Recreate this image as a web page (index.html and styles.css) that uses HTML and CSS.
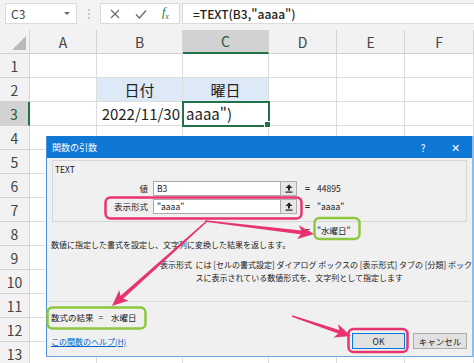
FILE: index.html
```html
<!DOCTYPE html>
<html lang="ja">
<head>
<meta charset="utf-8">
<link rel="stylesheet" href="styles.css">
</head>
<body>
<div class="app">
  <div class="toolbar">
    <div class="namebox"><span>C3</span><span class="dd"></span></div>
    <div class="grip"><i></i><i></i><i></i></div>
    <div class="fbtns">
      <svg width="10" height="10" viewBox="0 0 10 10"><path d="M1 1 L9 9 M9 1 L1 9" stroke="#6d6d6d" stroke-width="1.3"/></svg>
      <svg width="12" height="10" viewBox="0 0 12 10"><path d="M1 5.5 L4.5 9 L11 1.5" fill="none" stroke="#6d6d6d" stroke-width="1.4"/></svg>
      <span class="fx">f<sub>x</sub></span>
    </div>
    <div class="formula">=TEXT(B3,"aaaa")</div>
  </div>

  <div class="sheet">
    <div class="corner"><span class="tri"></span></div>
    <div class="ch">A</div><div class="ch">B</div><div class="ch sel">C</div><div class="ch">D</div><div class="ch">E</div><div class="ch">F</div>

    <div class="rh">1</div><div class="c"></div><div class="c"></div><div class="c"></div><div class="c"></div><div class="c"></div><div class="c"></div>
    <div class="rh">2</div><div class="c"></div><div class="c hd">日付</div><div class="c hd">曜日</div><div class="c"></div><div class="c"></div><div class="c"></div>
    <div class="rh sel">3</div><div class="c"></div><div class="c num">2022/11/30</div><div class="c active">aaaa")</div><div class="c"></div><div class="c"></div><div class="c"></div>
    <div class="rh">4</div><div class="c"></div><div class="c"></div><div class="c"></div><div class="c"></div><div class="c"></div><div class="c"></div>
    <div class="rh">5</div><div class="c"></div><div class="c"></div><div class="c"></div><div class="c"></div><div class="c"></div><div class="c"></div>
    <div class="rh">6</div><div class="c"></div><div class="c"></div><div class="c"></div><div class="c"></div><div class="c"></div><div class="c"></div>
    <div class="rh">7</div><div class="c"></div><div class="c"></div><div class="c"></div><div class="c"></div><div class="c"></div><div class="c"></div>
    <div class="rh">8</div><div class="c"></div><div class="c"></div><div class="c"></div><div class="c"></div><div class="c"></div><div class="c"></div>
    <div class="rh">9</div><div class="c"></div><div class="c"></div><div class="c"></div><div class="c"></div><div class="c"></div><div class="c"></div>
    <div class="rh">10</div><div class="c"></div><div class="c"></div><div class="c"></div><div class="c"></div><div class="c"></div><div class="c"></div>
    <div class="rh">11</div><div class="c"></div><div class="c"></div><div class="c"></div><div class="c"></div><div class="c"></div><div class="c"></div>
    <div class="rh">12</div><div class="c"></div><div class="c"></div><div class="c"></div><div class="c"></div><div class="c"></div><div class="c"></div>
    <div class="rh">13</div><div class="c"></div><div class="c"></div><div class="c"></div><div class="c"></div><div class="c"></div><div class="c"></div>
  </div>

  <div class="dialog">
    <div class="titlebar">
      <span class="title">関数の引数</span>
      <span class="tbtn help-q">?</span>
      <span class="tbtn close">✕</span>
    </div>
    <div class="group">
      <div class="gname">TEXT</div>
      <div class="arg">
        <span class="alabel">値</span>
        <span class="ainput">B3</span>
        <span class="refbtn"><svg width="8" height="9" viewBox="0 0 8 9"><path d="M4 0.5 L7.5 4 L5 4 L5 6.5 L3 6.5 L3 4 L0.5 4 Z" fill="#222"/><rect x="0.5" y="7.5" width="7" height="1.2" fill="#222"/></svg></span>
        <span class="aval"><b>=</b>44895</span>
      </div>
      <div class="arg">
        <span class="alabel">表示形式</span>
        <span class="ainput">"aaaa"</span>
        <span class="refbtn"><svg width="8" height="9" viewBox="0 0 8 9"><path d="M4 0.5 L7.5 4 L5 4 L5 6.5 L3 6.5 L3 4 L0.5 4 Z" fill="#222"/><rect x="0.5" y="7.5" width="7" height="1.2" fill="#222"/></svg></span>
        <span class="aval"><b>=</b>"aaaa"</span>
      </div>
    </div>
    <div class="fres"><b>=</b>"水曜日"</div>
    <div class="desc">数値に指定した書式を設定し、文字列に変換した結果を返します。</div>
    <div class="detail">
      <span class="dt">表示形式</span>
      <span class="dd2">には [セルの書式設定] ダイアログ ボックスの [表示形式] タブの [分類] ボック<br>スに表示されている数値形式を、文字列として指定します</span>
    </div>
    <div class="sep"></div>
    <div class="result">数式の結果 <span class="eq">=</span> 水曜日</div>
    <div class="bottom">
      <a class="help" href="#">この関数のヘルプ(H)</a>
      <div class="btns">
        <span class="btn ok">OK</span>
        <span class="btn">キャンセル</span>
      </div>
    </div>
  </div>

  <svg class="annot" width="474" height="363" viewBox="0 0 474 363">
    <g fill="none" stroke-width="2.5">
      <rect x="105.5" y="197.5" width="196" height="21" rx="5" stroke="#e8336f"/>
      <rect x="348.5" y="329" width="59" height="23" rx="5" stroke="#e8336f"/>
      <rect x="314.5" y="218" width="45" height="21" rx="5" stroke="#8dc63f"/>
      <rect x="47.5" y="307.5" width="98" height="21" rx="5" stroke="#8dc63f"/>
    </g>
    <g fill="#e8336f">
      <polygon points="207.5,221.56 206.5,220.44 116.67,299.2 119.33,302.2"/>
      <polygon points="112,306 128.59,300.55 120.94,298 119.25,290.11"/>
      <polygon points="205.09,220.26 306.34,231.06 305.86,235.04 204.91,221.74"/>
      <polygon points="314,234 297.28,239.06 302.08,232.58 298.94,225.16"/>
      <polygon points="292.24,315.29 344.04,331.51 342.76,335.29 291.76,316.71"/>
      <polygon points="351,336 333.6,337.49 339.64,332.15 338.1,324.23"/>
    </g>
  </svg>
</div>
</body>
</html>
```

FILE: styles.css
```css
* { box-sizing: border-box; }
html, body { margin: 0; padding: 0; }
body { width: 474px; height: 363px; overflow: hidden; background: #fff; font-family: "Noto Sans CJK JP", "Noto Sans", sans-serif; }
.app { position: relative; width: 474px; height: 363px; overflow: hidden; }

/* formula bar */
.toolbar { height: 30px; background: #f3f3f3; display: flex; padding: 3px 0 0 5px; align-items: flex-start; }
.namebox { width: 72px; height: 21px; background: #fff; border: 1px solid #dadada; display: flex; align-items: center; justify-content: space-between; padding: 0 6px 0 5px; font-size: 12px; color: #444; }
.dd { width: 0; height: 0; border-left: 3px solid transparent; border-right: 3px solid transparent; border-top: 3px solid #666; }
.grip { width: 23px; height: 21px; display: flex; flex-direction: column; align-items: center; justify-content: center; gap: 2px; }
.grip i { width: 2px; height: 2px; background: #c8c8c8; display: block; }
.fbtns { width: 80px; height: 21px; background: #fff; border: 1px solid #dadada; display: flex; align-items: center; padding-left: 9px; gap: 15px; }
.fx { font-family: "Liberation Serif", serif; font-style: italic; color: #217346; font-size: 12px; line-height: 1; }
.fx sub { font-size: 8px; }
.formula { flex: 1; height: 21px; margin-left: 2px; background: #fff; border: 1px solid #dadada; border-right: 0; padding-left: 10px; font-size: 12px; font-weight: 500; color: #222; line-height: 19px; }

/* sheet */
.sheet { display: grid; grid-template-columns: 30px 67px 86px 86px 68px 68px 69px; grid-auto-rows: 24px; }
.corner, .ch, .rh { background: #f2f2f2; color: #444; border-right: 1px solid #d4d4d4; border-bottom: 1px solid #cfcfcf; display: flex; align-items: center; justify-content: center; font-size: 14px; }
.corner { position: relative; }
.tri { position: absolute; right: 3px; bottom: 3px; width: 0; height: 0; border-left: 14px solid transparent; border-bottom: 14px solid #b9b9b9; }
.ch.sel { background: #d2d2d2; border-bottom: 2px solid #217346; color: #1f5c37; }
.rh.sel { background: #d2d2d2; border-right: 2px solid #217346; color: #1f5c37; }
.c { border-right: 1px solid #dcdcdc; border-bottom: 1px solid #dcdcdc; font-size: 15px; color: #222; display: flex; align-items: center; padding: 0 2px; white-space: nowrap; }
.c.hd { background: #dde9f6; justify-content: center; }
.c.num { justify-content: flex-end; }
.c.active { position: relative; outline: 2px solid #217346; outline-offset: -1px; z-index: 1; padding-left: 3px; }
.c.active::after { content: ""; position: absolute; right: -3px; bottom: -3px; width: 5px; height: 5px; background: #217346; border: 1px solid #fff; }

/* dialog */
.dialog { position: absolute; left: 46px; top: 136px; width: 428px; height: 221px; background: #f0f0f0; border-left: 1px solid #4a92d8; border-bottom: 1px solid #6aa6e0; border-right: 2px solid #8fbce8; display: flex; flex-direction: column; font-size: 8.5px; color: #222; z-index: 5; }
.titlebar { height: 22px; flex: none; background: #0f78d4; color: #fff; display: flex; align-items: center; padding: 0 7px 0 5px; }
.title { font-size: 9px; }
.tbtn { width: 20px; text-align: center; font-size: 10px; }
.tbtn.help-q { margin-left: auto; }
.tbtn.close { margin-left: 12px; font-size: 11px; }
.group { margin: 2px 5px 0 5px; height: 62px; flex: none; border: 1px solid #d7d7d7; padding: 2px 0 0 2px; }
.gname { line-height: 12px; font-size: 8.5px; }
.arg { display: grid; grid-template-columns: 98px 128px 16px auto; height: 15px; margin-top: 6px; align-items: stretch; line-height: 13px; }
.arg + .arg { margin-top: 3px; }
.alabel { text-align: right; padding-right: 5px; line-height: 15px; }
.ainput { background: #fff; border: 1px solid #a9a9a9; padding-left: 3px; }
.refbtn { background: #e6e6e6; border: 1px solid #adadad; border-left: 0; display: flex; align-items: center; justify-content: center; }
.aval { padding-left: 8px; line-height: 15px; }
.aval b, .fres b { font-weight: 700; margin-right: 7px; }
.fres { height: 16px; flex: none; line-height: 16px; padding-left: 258px; }
.desc { margin-top: 1px; line-height: 12px; padding-left: 4px; white-space: nowrap; font-size: 8px; }
.detail { margin-top: 7px; display: flex; padding-left: 113px; line-height: 13px; font-size: 8px; white-space: nowrap; }
.dt { width: 42px; }
.sep { margin-top: 17px; height: 1px; flex: none; background: #dcdcdc; margin-right: 2px; }
.result { margin-top: 9px; line-height: 12px; padding-left: 4px; }
.result .eq { margin: 0 6px 0 3px; }
.bottom { margin-top: 10px; height: 16px; display: flex; align-items: center; justify-content: space-between; padding: 0 5px 0 4px; }
.help { color: #0066cc; text-decoration: underline; font-size: 8px; }
.btns { display: flex; gap: 8px; }
.btn { width: 54px; height: 16px; background: #e1e1e1; border: 1px solid #adadad; display: flex; align-items: center; justify-content: center; font-size: 8.5px; }
.btn.ok { width: 53px; border-color: #0078d7; }

.annot { position: absolute; left: 0; top: 0; pointer-events: none; z-index: 10; }
```
